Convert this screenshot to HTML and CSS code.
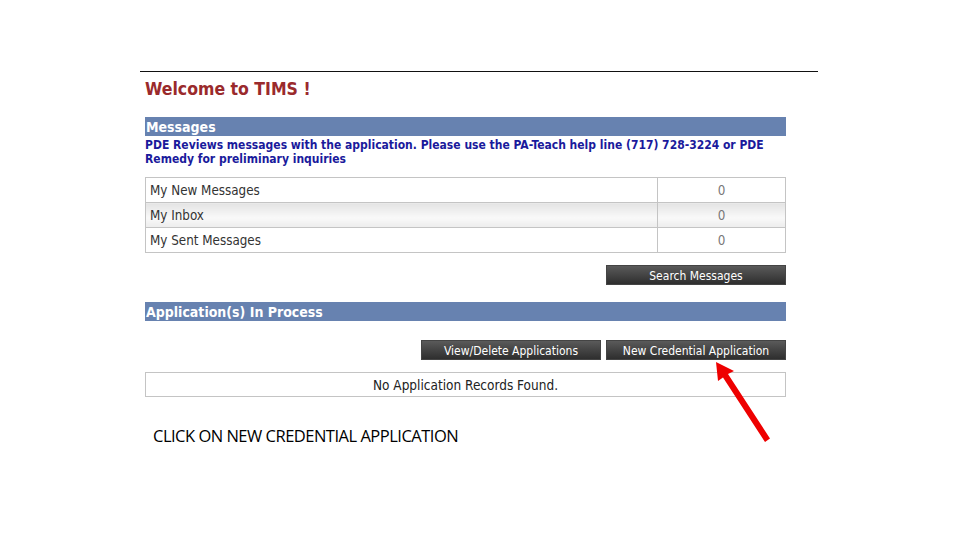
FILE: index.html
```html
<!DOCTYPE html>
<html>
<head>
<meta charset="utf-8">
<link rel="stylesheet" href="styles.css">
</head>
<body>
<div class="page">
  <div class="rule"></div>
  <div class="content">
    <h1 class="welcome">Welcome to TIMS !</h1>
    <div class="bar">Messages</div>
    <p class="notice">PDE Reviews messages with the application. Please use the PA-Teach help line (717) 728-3224 or PDE Remedy for preliminary inquiries</p>
    <table class="msgs">
      <tr><td class="lbl">My New Messages</td><td class="num">0</td></tr>
      <tr class="alt"><td class="lbl">My Inbox</td><td class="num">0</td></tr>
      <tr><td class="lbl">My Sent Messages</td><td class="num">0</td></tr>
    </table>
    <div class="actions first">
      <span class="btn">Search Messages</span>
    </div>
    <div class="bar bar2">Application(s) In Process</div>
    <div class="actions second">
      <span class="btn">View/Delete Applications</span>
      <span class="btn">New Credential Application</span>
    </div>
    <div class="empty">No Application Records Found.</div>
    <p class="hint">CLICK ON NEW CREDENTIAL APPLICATION</p>
  </div>
  <svg class="arrow" width="70" height="90" viewBox="0 0 70 90">
    <polygon points="16,2 18,21 23,17.5 65,82 70,78.5 28,14 34,11" fill="#ee0000"/>
  </svg>
</div>
</body>
</html>
```
FILE: styles.css
```css
html, body {
  margin: 0;
  padding: 0;
  background: #fff;
}
.page {
  position: relative;
  width: 960px;
  height: 540px;
  padding-top: 71px;
  box-sizing: border-box;
  font-family: "DejaVu Sans Condensed", "DejaVu Sans", sans-serif;
}
.rule {
  margin-left: 140px;
  width: 678px;
  height: 1px;
  background: #111;
}
.content {
  margin-left: 145px;
  width: 641px;
}
.welcome {
  margin: 7px 0 0;
  height: 38px;
  font-size: 17.5px;
  font-weight: bold;
  color: #9a2a2c;
  line-height: 20px;
}
.bar {
  height: 19px;
  line-height: 21px;
  overflow: hidden;
  background: #6782b0;
  color: #fff;
  font-weight: bold;
  font-size: 14px;
  padding-left: 1px;
}
.notice {
  margin: 2px 0 0;
  font-size: 12px;
  font-weight: bold;
  line-height: 14px;
  color: #1a1a9c;
  width: 630px;
}
.msgs {
  margin-top: 11px;
  width: 641px;
  border-collapse: collapse;
  font-size: 13.3px;
  color: #333;
}
.msgs td {
  border: 1px solid #c4c4c4;
  height: 24px;
  padding: 0;
}
.msgs .lbl {
  padding-left: 4px;
  width: 507px;
}
.msgs .num {
  text-align: center;
  color: #777;
}
.msgs .alt td {
  background: linear-gradient(#e4e4e4, #f9f9f9 60%, #ececec);
}
.actions {
  display: flex;
  justify-content: flex-end;
  gap: 5px;
}
.actions.first {
  margin-top: 12px;
  margin-bottom: 17px;
}
.actions.second {
  margin-top: 19px;
  margin-bottom: 12px;
}
.btn {
  width: 180px;
  height: 20px;
  line-height: 20px;
  text-align: center;
  color: #fff;
  font-size: 12px;
  background: linear-gradient(#5a5a5a, #2e2e2e);
  box-sizing: border-box;
  border: 1px solid #444;
}
.empty {
  height: 25px;
  box-sizing: border-box;
  border: 1px solid #c4c4c4;
  text-align: center;
  line-height: 24px;
  font-size: 13.5px;
  color: #222;
}
.hint {
  margin: 27px 0 0 8px;
  font-family: "Open Sans", sans-serif;
  font-size: 16.5px;
  letter-spacing: -0.5px;
  color: #000;
}
.arrow {
  position: absolute;
  left: 700px;
  top: 360px;
}
```
